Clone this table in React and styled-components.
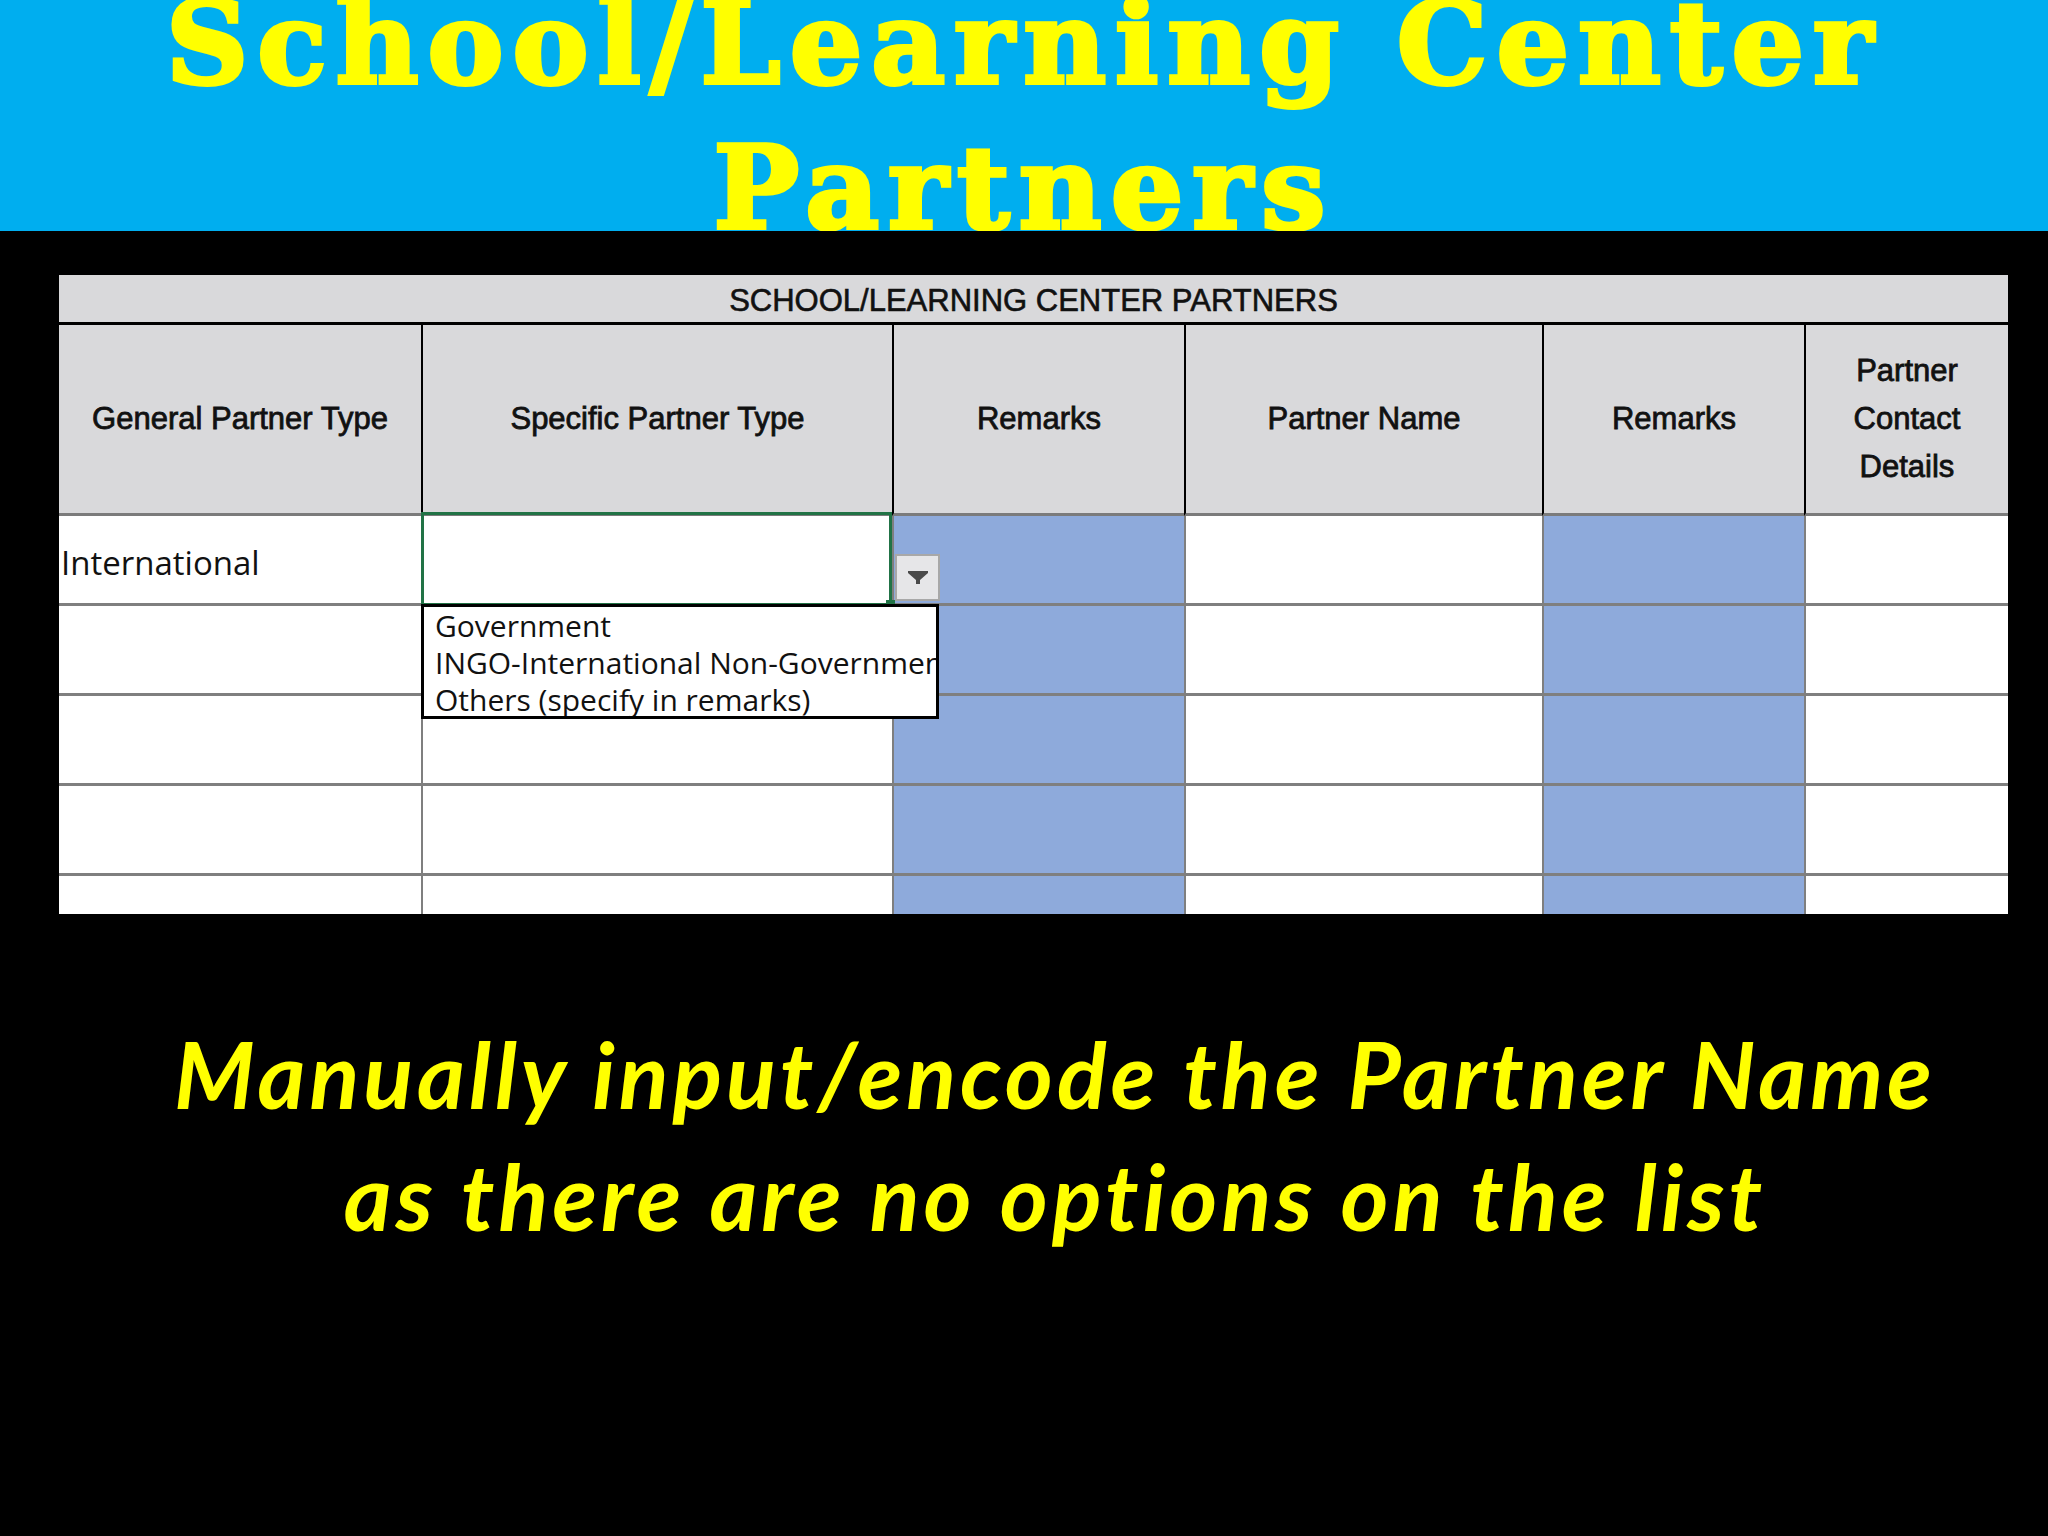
import React from "react";
import styled, { createGlobalStyle } from "styled-components";

const GlobalStyle = createGlobalStyle`
  html, body {
    margin: 0;
    padding: 0;
    background: #000;
  }
  #root {
    width: 2048px;
    height: 1536px;
    background: #000;
  }
`;

const Slide = styled.div`
  width: 2048px;
  height: 1536px;
  background: #000;
  overflow: hidden;
`;

const Banner = styled.header`
  height: 231px;
  background: #00aeef;
  overflow: hidden;
  display: flex;
  justify-content: center;
`;

const BannerTitle = styled.h1`
  margin: -29px 0 0;
  font-family: "DejaVu Serif", "Liberation Serif", serif;
  font-weight: bold;
  font-size: 114px;
  line-height: 145px;
  letter-spacing: 9px;
  color: #ffff00;
  -webkit-text-stroke: 4px #ffff00;
  text-align: center;
  white-space: nowrap;
`;

const Sheet = styled.div`
  margin: 44px 0 0 59px;
  width: 1949px;
  display: grid;
  grid-template-columns: 362px 471px 292px 358px 262px 204px;
  font-family: "Liberation Sans", Arial, sans-serif;
`;

const SheetTitle = styled.div`
  grid-column: 1 / -1;
  height: 50px;
  box-sizing: border-box;
  border-bottom: 3px solid #000;
  background: #d9d9db;
  display: flex;
  align-items: center;
  justify-content: center;
  font-size: 31px;
  color: #111;
  -webkit-text-stroke: 0.6px #111;
  padding-top: 4px;
`;

const HeadCell = styled.div`
  height: 191px;
  box-sizing: border-box;
  background: #d9d9db;
  border-left: ${(p) => (p.$first ? "none" : "2px solid #000")};
  border-bottom: 3px solid #7b7b7b;
  display: flex;
  align-items: center;
  justify-content: center;
  text-align: center;
  font-size: 31px;
  line-height: 48px;
  color: #111;
  -webkit-text-stroke: 0.8px #111;
`;

const Cell = styled.div`
  position: relative;
  height: ${(p) => (p.$last ? "38px" : "90px")};
  box-sizing: border-box;
  background: ${(p) => (p.$blue ? "#8eaadb" : "#fff")};
  border-left: ${(p) => (p.$first ? "none" : "2px solid #7f7f7f")};
  border-bottom: ${(p) => (p.$last ? "none" : "3px solid #7f7f7f")};
  display: flex;
  align-items: center;
  padding: 6px 0 0 2px;
  font-family: "Open Sans", "Noto Sans", sans-serif;
  font-size: 33px;
  color: #111;
`;

const Selection = styled.div`
  position: absolute;
  left: -2px;
  top: -4px;
  width: 471px;
  height: 94px;
  box-sizing: border-box;
  border: 3px solid #217346;
  z-index: 2;
`;

const FillHandle = styled.div`
  position: absolute;
  right: -6px;
  bottom: -4px;
  width: 9px;
  height: 7px;
  background: #217346;
`;

const DropButton = styled.div`
  position: absolute;
  left: 472px;
  top: 38px;
  width: 45px;
  height: 47px;
  box-sizing: border-box;
  background: #e6e6e8;
  border: 2px solid #a8a8a8;
  display: flex;
  align-items: center;
  justify-content: center;
  z-index: 3;
`;

const DropList = styled.ul`
  position: absolute;
  left: -2px;
  top: 88px;
  width: 518px;
  height: 115px;
  box-sizing: border-box;
  margin: 0;
  padding: 0 0 0 11px;
  list-style: none;
  background: #fff;
  border: 3px solid #000;
  overflow: hidden;
  z-index: 3;
`;

const DropItem = styled.li`
  font-family: "Open Sans", "Noto Sans", sans-serif;
  font-size: 30px;
  line-height: 37px;
  color: #111;
  white-space: nowrap;
`;

const Note = styled.p`
  margin: 99px 0 0 62px;
  width: 1986px;
  text-align: center;
  font-family: Lato, "Open Sans", sans-serif;
  font-weight: bold;
  font-style: italic;
  font-size: 92px;
  line-height: 122px;
  letter-spacing: 4px;
  color: #ffff00;
`;

const headers = [
  "General Partner Type",
  "Specific Partner Type",
  "Remarks",
  "Partner Name",
  "Remarks",
  <>
    Partner
    <br />
    Contact
    <br />
    Details
  </>,
];

const blueCols = [2, 4];

const ArrowIcon = () => (
  <svg width="20" height="13" viewBox="0 0 20 13">
    <path d="M0 0 H20 V2 L12 9 V13 H8 V9 L0 2 Z" fill="#4a4a4a" />
  </svg>
);

const App = () => {
  const rows = [0, 1, 2, 3, 4];
  return (
    <Slide>
      <GlobalStyle />
      <Banner>
        <BannerTitle>
          School/Learning Center
          <br />
          Partners
        </BannerTitle>
      </Banner>

      <Sheet>
        <SheetTitle>SCHOOL/LEARNING CENTER PARTNERS</SheetTitle>
        {headers.map((h, i) => (
          <HeadCell key={`h-${i}`} $first={i === 0}>
            {h}
          </HeadCell>
        ))}
        {rows.map((r) =>
          headers.map((_, c) => (
            <Cell
              key={`c-${r}-${c}`}
              $first={c === 0}
              $last={r === rows.length - 1}
              $blue={blueCols.includes(c)}
            >
              {r === 0 && c === 0 && "International"}
              {r === 0 && c === 1 && (
                <>
                  <Selection>
                    <FillHandle />
                  </Selection>
                  <DropButton>
                    <ArrowIcon />
                  </DropButton>
                  <DropList>
                    <DropItem>Government</DropItem>
                    <DropItem>INGO-International Non-Government Organization</DropItem>
                    <DropItem>Others (specify in remarks)</DropItem>
                  </DropList>
                </>
              )}
            </Cell>
          ))
        )}
      </Sheet>

      <Note>
        Manually input/encode the Partner Name
        <br />
        as there are no options on the list
      </Note>
    </Slide>
  );
};

export default App;
